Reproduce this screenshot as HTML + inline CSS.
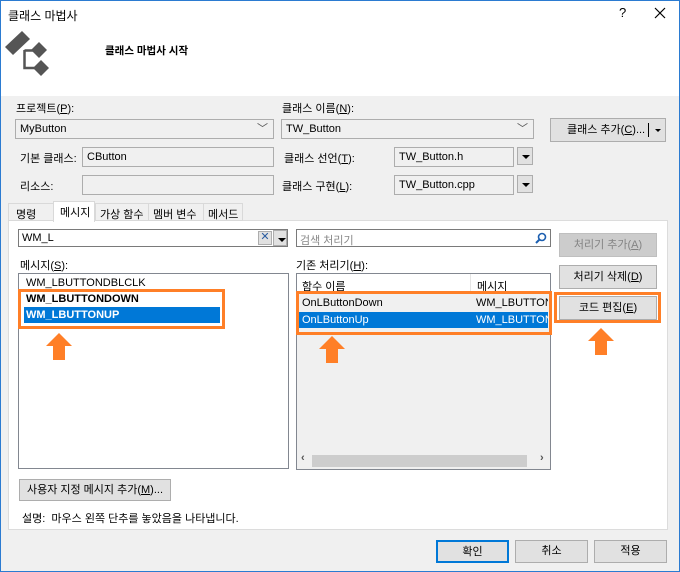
<!DOCTYPE html>
<html><head><meta charset="utf-8"><style>
*{box-sizing:border-box;margin:0;padding:0}
body{width:680px;height:572px;background:#f0f0f0;font-family:"Liberation Sans","Noto Sans CJK KR","NanumGothic",sans-serif;font-size:11px;color:#000;position:relative;overflow:hidden}
.a{position:absolute;white-space:nowrap}
.box{position:absolute;border:1px solid #adadad;background:#f0f0f0;padding:0 4px;line-height:18px}
.wbox{position:absolute;border:1px solid #7a7a7a;background:#fff}
.btn{position:absolute;border:1px solid #adadad;background:#e1e1e1;text-align:center}
.dd{position:absolute;border:1px solid #adadad;background:#e1e1e1;width:16px;height:18px}
.dd:after{content:"";position:absolute;left:4px;top:7px;border-left:4px solid transparent;border-right:4px solid transparent;border-top:4px solid #000}
.or{position:absolute;border:3px solid #ff7f27}
.arrow{position:absolute;width:27px;height:27px}
</style></head><body>
<div class="a" style="left:0;top:0;width:680px;height:96px;background:#fff"></div>
<div class="a" style="left:0;top:0;width:1px;height:572px;background:#2b7bd1"></div>
<div class="a" style="left:679px;top:0;width:1px;height:572px;background:#2b7bd1"></div>
<div class="a" style="left:0;top:0;width:680px;height:1px;background:#2b7bd1"></div>
<div class="a" style="left:0;top:571px;width:680px;height:1px;background:#2b7bd1"></div>
<div class="a" style="left:8px;top:7px;font-size:12px">클래스 마법사</div>
<div class="a" style="left:619px;top:5px;font-size:13px">?</div>
<svg class="a" style="left:654px;top:7px" width="12" height="12"><path d="M1 1L11 11M11 1L1 11" stroke="#000" stroke-width="1.2"/></svg>
<svg class="a" style="left:0;top:20px" width="60" height="60">
<path d="M24.5 30V48H38M24.5 30.5H36" stroke="#555" stroke-width="2.5" fill="none"/>
<path d="M5 27L22 11L30 19L13 35Z" fill="#555"/>
<path d="M31 30L39 22L47 30L39 38Z" fill="#555"/>
<path d="M33 48L41 40L49 48L41 56Z" fill="#555"/>
</svg>
<div class="a" style="left:105px;top:43px;font-weight:bold;font-size:10.5px">클래스 마법사 시작</div>

<div class="a" style="left:16px;top:100px">프로젝트(<u>P</u>):</div>
<div class="box" style="left:15px;top:119px;width:259px;height:20px">MyButton<span style="position:absolute;right:5px;color:#555">﹀</span></div>
<div class="a" style="left:282px;top:100px">클래스 이름(<u>N</u>):</div>
<div class="box" style="left:281px;top:119px;width:253px;height:20px">TW_Button<span style="position:absolute;right:5px;color:#555">﹀</span></div>
<div class="btn" style="left:550px;top:118px;width:116px;height:24px;line-height:22px;text-align:left;padding-left:16px">클래스 추가(<u>C</u>)...<span style="position:absolute;left:97px;top:4px;width:1px;height:14px;background:#000"></span><span style="position:absolute;left:104px;top:10px;border-left:3px solid transparent;border-right:3px solid transparent;border-top:3px solid #000"></span></div>

<div class="a" style="left:20px;top:150px">기본 클래스:</div>
<div class="box" style="left:82px;top:147px;width:192px;height:20px">CButton</div>
<div class="a" style="left:284px;top:150px">클래스 선언(<u>T</u>):</div>
<div class="box" style="left:394px;top:147px;width:120px;height:20px">TW_Button.h</div>
<div class="dd" style="left:517px;top:147px"></div>
<div class="a" style="left:20px;top:178px">리소스:</div>
<div class="box" style="left:82px;top:175px;width:192px;height:20px"></div>
<div class="a" style="left:282px;top:178px">클래스 구현(<u>L</u>):</div>
<div class="box" style="left:394px;top:175px;width:120px;height:20px">TW_Button.cpp</div>
<div class="dd" style="left:517px;top:175px"></div>

<div class="a" style="left:8px;top:220px;width:660px;height:310px;background:#fff;border:1px solid #dcdcdc"></div>
<div class="a" style="left:8px;top:203px;width:235px;height:18px;border:1px solid #d9d9d9;background:#f0f0f0"></div>
<div class="a" style="left:16px;top:206px">명령</div>
<div class="a" style="left:53px;top:201px;width:42px;height:21px;background:#fff;border:1px solid #d9d9d9;border-bottom:none"></div>
<div class="a" style="left:60px;top:204px">메시지</div>
<div class="a" style="left:95px;top:204px;width:1px;height:17px;background:#d9d9d9"></div>
<div class="a" style="left:100px;top:206px">가상 함수</div>
<div class="a" style="left:148px;top:204px;width:1px;height:17px;background:#d9d9d9"></div>
<div class="a" style="left:153px;top:206px">멤버 변수</div>
<div class="a" style="left:203px;top:204px;width:1px;height:17px;background:#d9d9d9"></div>
<div class="a" style="left:208px;top:206px">메서드</div>

<div class="wbox" style="left:18px;top:229px;width:270px;height:18px;border-color:#7a7a7a"><span style="position:absolute;left:3px;top:2px">WM_L</span></div>
<div class="a" style="left:258px;top:231px;width:14px;height:14px;background:#e1e1e1;border:1px solid #adadad;color:#2a5ba0;font-size:11px;line-height:11px;text-align:center">✕</div>
<div class="dd" style="left:273px;top:230px;width:14px;height:16px"></div>
<div class="a" style="left:20px;top:257px">메시지(<u>S</u>):</div>
<div class="wbox" style="left:18px;top:273px;width:271px;height:196px;border-color:#828790"></div>
<div class="a" style="left:26px;top:277px">WM_LBUTTONDBLCLK</div>
<div class="a" style="left:26px;top:293px;font-weight:bold">WM_LBUTTONDOWN</div>
<div class="a" style="left:24px;top:307px;width:196px;height:16px;background:#0078d7;color:#fff;font-weight:bold;padding-left:2px;line-height:16px;outline:1px dotted #fff">WM_LBUTTONUP</div>
<div class="or" style="left:18px;top:289px;width:207px;height:40px"></div>
<svg class="arrow" style="left:46px;top:333px"><path d="M13 0L26 13H19V27H7V13H0Z" fill="#ff7f27"/></svg>

<div class="wbox" style="left:296px;top:229px;width:255px;height:18px;border-color:#7a7a7a"><span style="position:absolute;left:3px;top:2px;color:#888">검색 처리기</span>
<svg style="position:absolute;right:3px;top:2px" width="12" height="12"><circle cx="7" cy="5" r="3.5" stroke="#1c5fb0" stroke-width="1.6" fill="none"/><path d="M4.5 7.5L1 11" stroke="#1c5fb0" stroke-width="2"/></svg></div>
<div class="a" style="left:296px;top:257px">기존 처리기(<u>H</u>):</div>
<div class="a" style="left:296px;top:273px;width:255px;height:197px;background:#f0f0f0;border:1px solid #828790"></div>
<div class="a" style="left:297px;top:274px;width:253px;height:18px;background:#fff"></div>
<div class="a" style="left:470px;top:274px;width:1px;height:18px;background:#e5e5e5"></div>
<div class="a" style="left:302px;top:278px">함수 이름</div>
<div class="a" style="left:477px;top:278px">메시지</div>
<div class="a" style="left:297px;top:294px;width:253px;height:17px;background:#f0f0f0"></div>
<div class="a" style="left:302px;top:297px">OnLButtonDown</div>
<div class="a" style="left:476px;top:297px;width:72px;overflow:hidden">WM_LBUTTON...</div>
<div class="a" style="left:298px;top:312px;width:250px;height:16px;background:#0078d7"></div>
<div class="a" style="left:302px;top:314px;color:#fff">OnLButtonUp</div>
<div class="a" style="left:476px;top:314px;color:#fff">WM_LBUTTON</div>
<div class="or" style="left:296px;top:291px;width:256px;height:44px"></div>
<svg class="arrow" style="left:319px;top:336px"><path d="M13 0L26 13H19V27H7V13H0Z" fill="#ff7f27"/></svg>
<div class="a" style="left:297px;top:453px;width:253px;height:16px;background:#f0f0f0"></div>
<div class="a" style="left:312px;top:455px;width:215px;height:12px;background:#cdcdcd"></div>
<div class="a" style="left:301px;top:452px;font-size:11px;font-weight:bold;color:#555">‹</div>
<div class="a" style="left:540px;top:452px;font-size:11px;font-weight:bold;color:#555">›</div>

<div class="btn" style="left:559px;top:233px;width:98px;height:24px;line-height:22px;background:#cccccc;border-color:#bfbfbf;color:#838383">처리기 추가(<u>A</u>)</div>
<div class="btn" style="left:559px;top:265px;width:98px;height:24px;line-height:22px">처리기 삭제(<u>D</u>)</div>
<div class="btn" style="left:559px;top:296px;width:98px;height:24px;line-height:22px">코드 편집(<u>E</u>)</div>
<div class="or" style="left:554px;top:292px;width:107px;height:31px"></div>
<svg class="arrow" style="left:588px;top:328px"><path d="M13 0L26 13H19V27H7V13H0Z" fill="#ff7f27"/></svg>

<div class="btn" style="left:19px;top:479px;width:152px;height:22px;line-height:20px">사용자 지정 메시지 추가(<u>M</u>)...</div>
<div class="a" style="left:22px;top:510px">설명:&nbsp; 마우스 왼쪽 단추를 놓았음을 나타냅니다.</div>

<div class="btn" style="left:436px;top:540px;width:73px;height:23px;line-height:21px;border:2px solid #0078d7">확인</div>
<div class="btn" style="left:515px;top:540px;width:73px;height:23px;line-height:21px">취소</div>
<div class="btn" style="left:594px;top:540px;width:73px;height:23px;line-height:21px">적용</div>
</body></html>
